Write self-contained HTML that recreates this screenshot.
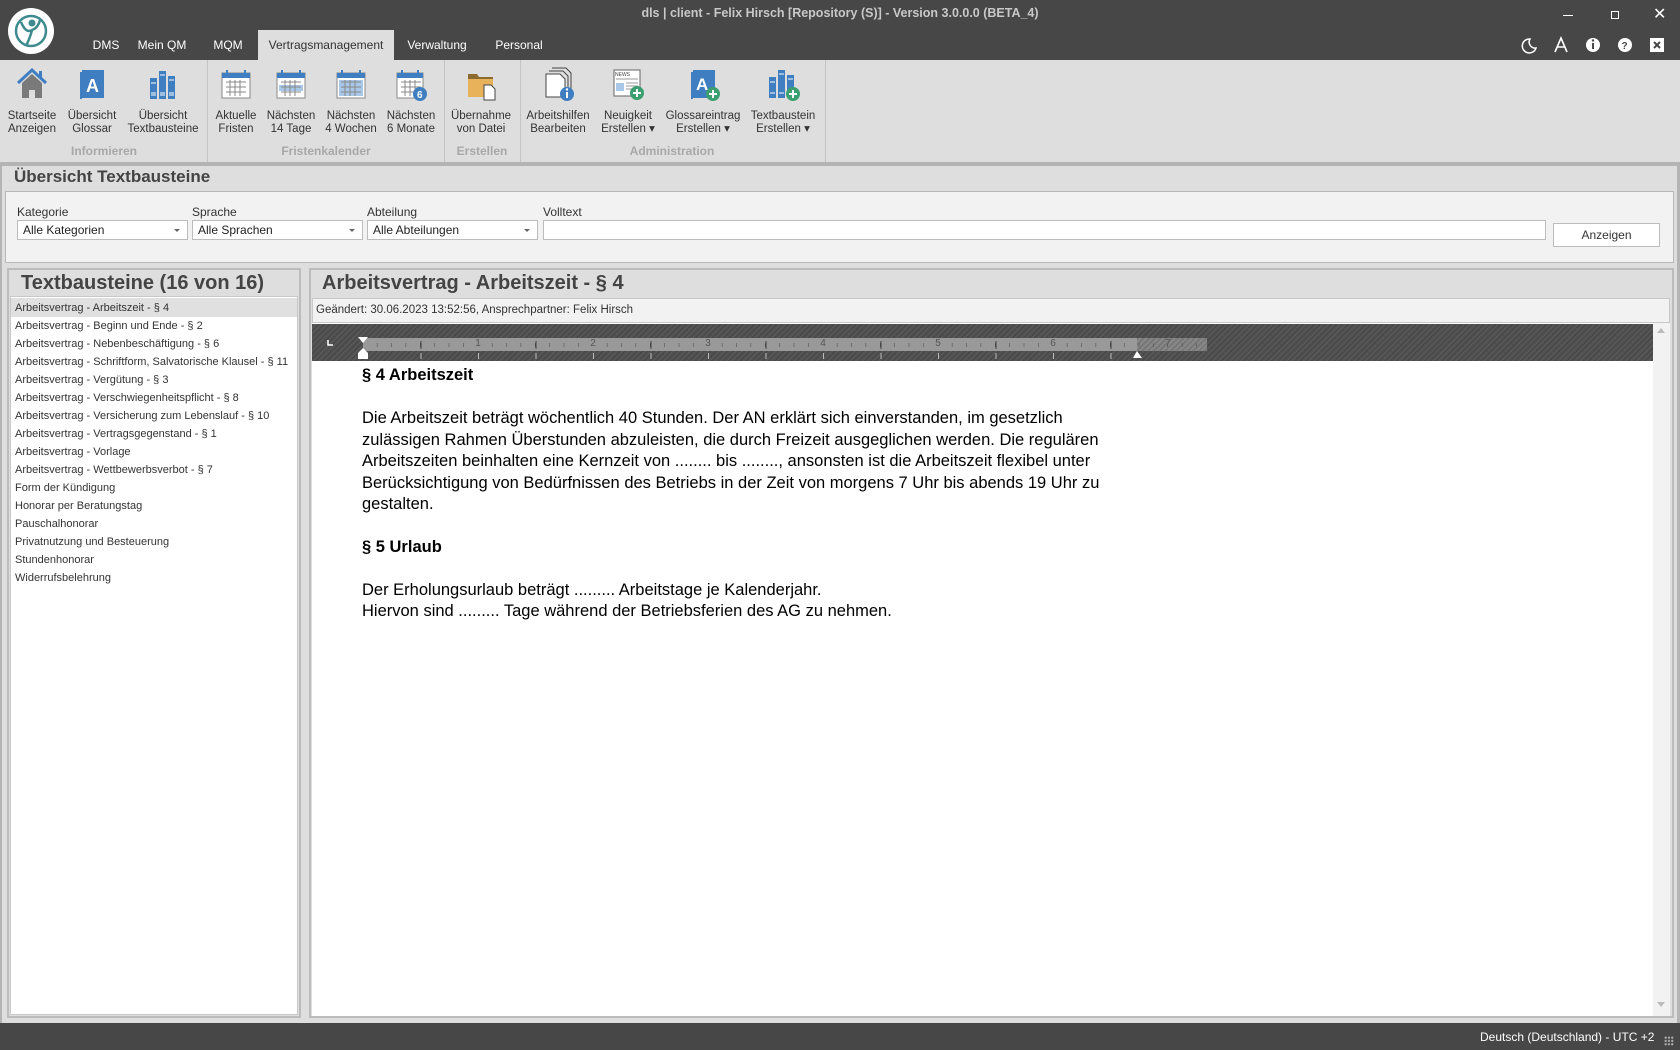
<!DOCTYPE html>
<html><head><meta charset="utf-8">
<style>
*{box-sizing:border-box;margin:0;padding:0}
body{width:1680px;height:1050px;overflow:hidden;background:#dedede;font-family:"Liberation Sans",sans-serif;position:relative;color:#222}
.abs{position:absolute}
#top{left:0;top:0;width:1680px;height:60px;background:#474747}
.tab{position:absolute;top:30px;height:30px;line-height:30px;color:#fff;font-size:12px;text-align:center}
#ribbon{left:0;top:60px;width:1680px;height:102px;background:#dedede}
.btn{position:absolute;top:0;height:102px;text-align:center;font-size:11.5px;color:#333;line-height:13px}
.btn svg{position:absolute;top:6px;left:50%;margin-left:-18px}
.btn .lb{position:absolute;top:50px;left:-20px;right:-20px}
.sep{position:absolute;top:0;width:1px;height:102px;background:#c4c4c4}
.grp{position:absolute;top:84px;font-size:12px;font-weight:bold;color:#a8a8a8;text-align:center}
.li{position:absolute;left:15px;font-size:11px;color:#333;white-space:nowrap}
.doc{position:absolute;left:362px;font-size:16.5px;color:#000;white-space:nowrap;font-family:"Liberation Sans",sans-serif}
.lab{position:absolute;top:205px;font-size:12px;color:#333}
.cmb{position:absolute;top:220px;height:20px;background:#fff;border:1px solid #bcbcbc;font-size:12px;line-height:18px;padding-left:5px;color:#222}
.cmb:after{content:"";position:absolute;right:7px;top:8px;border:3px solid transparent;border-top:3px solid #666}
.rn{position:absolute;top:338px;font-size:10px;color:#555;width:10px;text-align:center}
</style></head><body>
<div id="top" class="abs"></div>
<svg class="abs" style="left:8px;top:8px" width="46" height="46" viewBox="0 0 46 46"><circle cx="23" cy="23" r="23" fill="#fff"/><circle cx="23" cy="23" r="15" fill="none" stroke="#3d8a8f" stroke-width="2.5"/><circle cx="24" cy="15" r="3.5" fill="#3d8a8f"/><path d="M13 14 Q18 26 24 22 Q30 20 32 12 M24 22 Q22 30 18 38" fill="none" stroke="#3d8a8f" stroke-width="2.5"/></svg>
<div class="abs" style="left:0;top:6px;width:1680px;text-align:center;color:#c8c8c8;font-size:12.5px;font-weight:bold">dls | client - Felix Hirsch [Repository (S)] - Version 3.0.0.0 (BETA_4)</div>
<div class="abs" style="left:1563px;top:15px;width:10px;height:1px;background:#fff"></div>
<div class="abs" style="left:1611px;top:11px;width:8px;height:8px;border:1px solid #fff"></div>
<div class="abs" style="left:1653px;top:4px;color:#fff;font-size:16px">✕</div>
<svg class="abs" style="left:1520px;top:36px" width="160" height="18" viewBox="0 0 160 18"><path d="M10 3 A7 7 0 1 0 16 12 A6 6 0 0 1 10 3Z" fill="none" stroke="#fff" stroke-width="1.5"/><path d="M35 16 L41 2 L47 16 M37 11 H45" fill="none" stroke="#fff" stroke-width="1.6"/><circle cx="73" cy="9" r="7" fill="#fff"/><rect x="72" y="7" width="2" height="6" fill="#474747"/><circle cx="73" cy="4.5" r="1.2" fill="#474747"/><circle cx="105" cy="9" r="7" fill="#fff"/><text x="101.5" y="13" font-size="10" font-weight="bold" fill="#474747" font-family="Liberation Sans">?</text><rect x="130" y="2" width="14" height="14" fill="#fff"/><path d="M134 6 L140 12 M140 6 L134 12" stroke="#474747" stroke-width="2"/></svg>
<div class="tab" style="left:86px;width:40px">DMS</div>
<div class="tab" style="left:132px;width:60px">Mein QM</div>
<div class="tab" style="left:205px;width:46px">MQM</div>
<div class="tab" style="left:258px;width:136px;background:#dedede;color:#333">Vertragsmanagement</div>
<div class="tab" style="left:405px;width:64px">Verwaltung</div>
<div class="tab" style="left:490px;width:58px">Personal</div>

<div id="ribbon" class="abs">
<div class="btn" style="left:2px;width:60px"><svg width="36" height="36" viewBox="0 0 36 36"><path d="M4 17 L18 4 L32 17" fill="none" stroke="#3e7ec1" stroke-width="3"/><rect x="25" y="5" width="3" height="7" fill="#3e7ec1"/><path d="M8 17 L18 8 L28 17 V32 H21 V24 H15 V32 H8Z" fill="#7a7a7a"/></svg><div class="lb">Startseite<br>Anzeigen</div></div>
<div class="btn" style="left:62px;width:60px"><svg width="36" height="36" viewBox="0 0 36 36"><rect x="8" y="4" width="22" height="28" fill="#3e7ec1"/><rect x="6" y="6" width="2" height="27" fill="#3e7ec1"/><text x="12" y="26" font-size="18" font-weight="bold" fill="#fff" font-family="Liberation Sans">A</text></svg><div class="lb">Übersicht<br>Glossar</div></div>
<div class="btn" style="left:126px;width:74px"><svg width="36" height="36" viewBox="0 0 36 36"><rect x="5" y="12" width="7" height="21" fill="#3e7ec1"/><rect x="14" y="5" width="7" height="28" fill="#3e7ec1"/><rect x="23" y="10" width="7" height="23" fill="#3e7ec1"/><path d="M6 17h5M6 27h5M6 29h5M15 9h5M15 27h5M15 29h5M24 14h5M24 27h5M24 29h5" stroke="#fff"/></svg><div class="lb">Übersicht<br>Textbausteine</div></div>
<div class="sep" style="left:207px"></div>
<div class="btn" style="left:211px;width:50px"><svg width="36" height="36" viewBox="0 0 36 36"><rect x="4" y="7" width="28" height="25" fill="#fff" stroke="#888"/><rect x="4" y="7" width="28" height="5" fill="#3e7ec1"/><path d="M9 4v6M27 4v6" stroke="#3e7ec1" stroke-width="2"/><path d="M8 16h20M8 21h20M8 26h20M12 14v16M17 14v16M22 14v16" stroke="#888"/></svg><div class="lb">Aktuelle<br>Fristen</div></div>
<div class="btn" style="left:264px;width:54px"><svg width="36" height="36" viewBox="0 0 36 36"><rect x="4" y="7" width="28" height="25" fill="#fff" stroke="#888"/><rect x="4" y="7" width="28" height="5" fill="#3e7ec1"/><rect x="6" y="19" width="24" height="6" fill="#a9c8e8"/><path d="M9 4v6M27 4v6" stroke="#3e7ec1" stroke-width="2"/><path d="M8 16h20M8 21h20M8 26h20M12 14v16M17 14v16M22 14v16" stroke="#888"/></svg><div class="lb">Nächsten<br>14 Tage</div></div>
<div class="btn" style="left:323px;width:56px"><svg width="36" height="36" viewBox="0 0 36 36"><rect x="4" y="7" width="28" height="25" fill="#fff" stroke="#888"/><rect x="4" y="7" width="28" height="5" fill="#3e7ec1"/><rect x="6" y="14" width="24" height="16" fill="#a9c8e8"/><path d="M9 4v6M27 4v6" stroke="#3e7ec1" stroke-width="2"/><path d="M8 16h20M8 21h20M8 26h20M12 14v16M17 14v16M22 14v16" stroke="#888"/></svg><div class="lb">Nächsten<br>4 Wochen</div></div>
<div class="btn" style="left:382px;width:58px"><svg width="36" height="36" viewBox="0 0 36 36"><rect x="4" y="7" width="26" height="25" fill="#fff" stroke="#888"/><rect x="4" y="7" width="26" height="5" fill="#3e7ec1"/><path d="M9 4v6M25 4v6" stroke="#3e7ec1" stroke-width="2"/><path d="M8 16h20M8 21h20M8 26h20M12 14v16M17 14v16M22 14v16" stroke="#888"/><circle cx="27" cy="28" r="7" fill="#3e7ec1"/><text x="24" y="32" font-size="10" font-weight="bold" fill="#fff" font-family="Liberation Sans">6</text></svg><div class="lb">Nächsten<br>6 Monate</div></div>
<div class="sep" style="left:444px"></div>
<div class="btn" style="left:450px;width:62px"><svg width="36" height="36" viewBox="0 0 36 36"><path d="M5 8h9l2 3h14v6H5z" fill="#8a6a2e"/><rect x="5" y="13" width="25" height="18" fill="#e8b25a"/><path d="M21 19h7l4 4v11H21z" fill="#fff" stroke="#444"/></svg><div class="lb">Übernahme<br>von Datei</div></div>
<div class="sep" style="left:520px"></div>
<div class="btn" style="left:526px;width:64px"><svg width="36" height="36" viewBox="0 0 36 36"><path d="M6 8h14l5 5v18H6z" fill="#fff" stroke="#444"/><path d="M9 5h14l5 5v18" fill="none" stroke="#444"/><path d="M12 2h14l5 5v18" fill="none" stroke="#444"/><circle cx="27" cy="28" r="7" fill="#3e7ec1"/><rect x="26" y="26" width="2" height="6" fill="#fff"/><circle cx="27" cy="23.5" r="1.2" fill="#fff"/></svg><div class="lb">Arbeitshilfen<br>Bearbeiten</div></div>
<div class="btn" style="left:598px;width:60px"><svg width="36" height="36" viewBox="0 0 36 36"><rect x="4" y="4" width="26" height="26" fill="#fff" stroke="#666"/><text x="5" y="10" font-size="5" fill="#444" font-family="Liberation Sans">NEWS</text><rect x="6" y="17" width="8" height="8" fill="#a9c8e8"/><path d="M6 13h22M16 17h12M16 20h12M16 23h10" stroke="#999"/><circle cx="27" cy="27" r="7" fill="#3aa070"/><path d="M27 23v8M23 27h8" stroke="#fff" stroke-width="2"/></svg><div class="lb">Neuigkeit<br>Erstellen ▾</div></div>
<div class="btn" style="left:666px;width:74px"><svg width="36" height="36" viewBox="0 0 36 36"><rect x="8" y="4" width="22" height="28" fill="#3e7ec1"/><rect x="6" y="6" width="2" height="27" fill="#3e7ec1"/><text x="11" y="24" font-size="17" font-weight="bold" fill="#fff" font-family="Liberation Sans">A</text><circle cx="28" cy="28" r="7" fill="#3aa070"/><path d="M28 24v8M24 28h8" stroke="#fff" stroke-width="2"/></svg><div class="lb">Glossareintrag<br>Erstellen ▾</div></div>
<div class="btn" style="left:748px;width:70px"><svg width="36" height="36" viewBox="0 0 36 36"><rect x="4" y="11" width="7" height="21" fill="#3e7ec1"/><rect x="13" y="4" width="7" height="28" fill="#3e7ec1"/><rect x="22" y="9" width="7" height="23" fill="#3e7ec1"/><path d="M5 16h5M5 27h5M14 8h5M14 27h5M23 13h5" stroke="#fff"/><circle cx="28" cy="28" r="7" fill="#3aa070"/><path d="M28 24v8M24 28h8" stroke="#fff" stroke-width="2"/></svg><div class="lb">Textbaustein<br>Erstellen ▾</div></div>
<div class="sep" style="left:825px"></div>
<div class="grp" style="left:62px;width:84px">Informieren</div>
<div class="grp" style="left:260px;width:132px">Fristenkalender</div>
<div class="grp" style="left:444px;width:76px">Erstellen</div>
<div class="grp" style="left:600px;width:144px">Administration</div>
</div>
<div class="abs" style="left:0;top:162px;width:1680px;height:4px;background:#b4b4b4"></div>
<div class="abs" style="left:0;top:166px;width:2px;height:860px;background:#b4b4b4"></div>
<div class="abs" style="left:1677px;top:166px;width:3px;height:860px;background:#b4b4b4"></div>
<div class="abs" style="left:14px;top:167px;font-size:17px;font-weight:bold;color:#444">Übersicht Textbausteine</div>

<div class="abs" style="left:5px;top:191px;width:1669px;height:72px;background:#f2f2f2;border:1px solid #b8b8b8"></div>
<div class="lab" style="left:17px">Kategorie</div>
<div class="lab" style="left:192px">Sprache</div>
<div class="lab" style="left:367px">Abteilung</div>
<div class="lab" style="left:543px">Volltext</div>
<div class="cmb" style="left:17px;width:171px">Alle Kategorien</div>
<div class="cmb" style="left:192px;width:171px">Alle Sprachen</div>
<div class="cmb" style="left:367px;width:171px">Alle Abteilungen</div>
<div class="abs" style="left:543px;top:220px;width:1003px;height:20px;background:#fff;border:1px solid #bcbcbc"></div>
<div class="abs" style="left:1553px;top:223px;width:107px;height:24px;background:#fff;border:1px solid #bcbcbc;text-align:center;line-height:22px;font-size:12px;color:#333">Anzeigen</div>

<div class="abs" style="left:7px;top:268px;width:294px;height:750px;border:2px solid #bcbcbc;background:#dedede"></div>
<div class="abs" style="left:10px;top:296px;width:288px;height:719px;background:#fff;border:1px solid #c8c8c8"></div>
<div class="abs" style="left:21px;top:272px;font-size:20px;font-weight:bold;color:#444">Textbausteine (16 von 16)</div>
<div class="abs" style="left:11px;top:298px;width:286px;height:19px;background:#e0e0e0"></div>
<div class="li" style="top:302px">Arbeitsvertrag - Arbeitszeit - § 4</div>
<div class="li" style="top:320px">Arbeitsvertrag - Beginn und Ende - § 2</div>
<div class="li" style="top:338px">Arbeitsvertrag - Nebenbeschäftigung - § 6</div>
<div class="li" style="top:356px">Arbeitsvertrag - Schriftform, Salvatorische Klausel - § 11</div>
<div class="li" style="top:374px">Arbeitsvertrag - Vergütung - § 3</div>
<div class="li" style="top:392px">Arbeitsvertrag - Verschwiegenheitspflicht - § 8</div>
<div class="li" style="top:410px">Arbeitsvertrag - Versicherung zum Lebenslauf - § 10</div>
<div class="li" style="top:428px">Arbeitsvertrag - Vertragsgegenstand - § 1</div>
<div class="li" style="top:446px">Arbeitsvertrag - Vorlage</div>
<div class="li" style="top:464px">Arbeitsvertrag - Wettbewerbsverbot - § 7</div>
<div class="li" style="top:482px">Form der Kündigung</div>
<div class="li" style="top:500px">Honorar per Beratungstag</div>
<div class="li" style="top:518px">Pauschalhonorar</div>
<div class="li" style="top:536px">Privatnutzung und Besteuerung</div>
<div class="li" style="top:554px">Stundenhonorar</div>
<div class="li" style="top:572px">Widerrufsbelehrung</div>

<div class="abs" style="left:309px;top:268px;width:1365px;height:750px;border:2px solid #bcbcbc;background:#dedede"></div>
<div class="abs" style="left:322px;top:272px;font-size:20px;font-weight:bold;color:#444">Arbeitsvertrag - Arbeitszeit - § 4</div>
<div class="abs" style="left:312px;top:298px;width:1358px;height:25px;background:#f2f2f2;border:1px solid #c8c8c8"></div>
<div class="abs" style="left:316px;top:304px;font-size:11.5px;color:#333">Geändert: 30.06.2023 13:52:56, Ansprechpartner: Felix Hirsch</div>
<div class="abs" style="left:312px;top:323px;width:1358px;height:693px;background:#fff"></div>
<div class="abs" style="left:312px;top:324px;width:1341px;height:37px;background:repeating-linear-gradient(135deg,#4a4a4a 0 2px,#565656 2px 4px)"></div>
<div class="abs" style="left:1653px;top:323px;width:17px;height:693px;background:#f2f2f2"></div>
<div class="abs" style="left:1657px;top:328px;border:4px solid transparent;border-bottom:5px solid #bbb;border-top:0"></div>
<div class="abs" style="left:1657px;top:1002px;border:4px solid transparent;border-top:5px solid #bbb;border-bottom:0"></div>
<!-- ruler -->
<div class="abs" style="left:363px;top:338px;width:774px;height:13px;background:#999"></div>
<div class="abs" style="left:1137px;top:338px;width:70px;height:13px;background:repeating-linear-gradient(135deg,#777 0 2px,#888 2px 4px)"></div>
<div class="abs" style="left:363px;top:343px;width:844px;height:4px;background:repeating-linear-gradient(90deg,transparent 0 14px,#444 14px 15px,transparent 15px 14.375px);background-size:14.375px 4px"></div>
<div class="abs" style="left:363px;top:341px;width:844px;height:8px;background:linear-gradient(90deg,transparent 56.5px,#444 56.5px 57.5px,transparent 57.5px);background-size:115px 8px;background-position:1px 0"></div>
<div class="abs" style="left:363px;top:353px;width:790px;height:6px;background:linear-gradient(90deg,transparent 56.5px,#bbb 56.5px 57.5px,transparent 57.5px);background-size:57.5px 6px;background-position:1px 0"></div>
<div class="rn" style="left:473px;background:#999">1</div>
<div class="rn" style="left:588px;background:#999">2</div>
<div class="rn" style="left:703px;background:#999">3</div>
<div class="rn" style="left:818px;background:#999">4</div>
<div class="rn" style="left:933px;background:#999">5</div>
<div class="rn" style="left:1048px;background:#999">6</div>
<div class="rn" style="left:1163px">7</div>
<svg class="abs" style="left:326px;top:336px" width="890" height="24" viewBox="0 0 890 24"><path d="M2 4v5h5" fill="none" stroke="#fff" stroke-width="1.5"/>
<path d="M32 1h10l-5 6z M32 23h10v-6l-5-5-5 5z" fill="#fff"/><path d="M811 15l-4 7h9z" fill="#fff"/></svg>
<div class="doc" style="top:366px;font-weight:bold">§ 4 Arbeitszeit</div>
<div class="doc" style="top:409px">Die Arbeitszeit beträgt wöchentlich 40 Stunden. Der AN erklärt sich einverstanden, im gesetzlich</div>
<div class="doc" style="top:431px">zulässigen Rahmen Überstunden abzuleisten, die durch Freizeit ausgeglichen werden. Die regulären</div>
<div class="doc" style="top:452px">Arbeitszeiten beinhalten eine Kernzeit von ........ bis ........, ansonsten ist die Arbeitszeit flexibel unter</div>
<div class="doc" style="top:474px">Berücksichtigung von Bedürfnissen des Betriebs in der Zeit von morgens 7 Uhr bis abends 19 Uhr zu</div>
<div class="doc" style="top:495px">gestalten.</div>
<div class="doc" style="top:538px;font-weight:bold">§ 5 Urlaub</div>
<div class="doc" style="top:581px">Der Erholungsurlaub beträgt ......... Arbeitstage je Kalenderjahr.</div>
<div class="doc" style="top:602px">Hiervon sind ......... Tage während der Betriebsferien des AG zu nehmen.</div>

<div class="abs" style="left:0;top:1023px;width:1680px;height:27px;background:#474747"></div>
<div class="abs" style="left:1480px;top:1030px;font-size:12px;color:#fff">Deutsch (Deutschland) - UTC +2</div>
<div class="abs" style="left:1664px;top:1036px;width:10px;height:10px;background:radial-gradient(circle,#aaa 1px,transparent 1.2px) 0 0/3.3px 3.3px"></div>
</body></html>
